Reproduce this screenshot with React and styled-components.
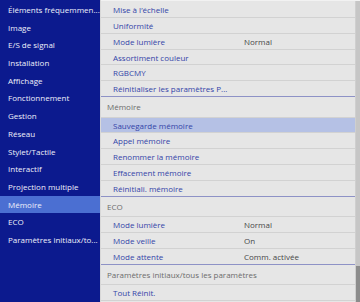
import React from 'react';
import styled, { createGlobalStyle } from 'styled-components';

const GlobalStyle = createGlobalStyle`
  html, body {
    margin: 0;
    padding: 0;
    width: 360px;
    height: 302px;
    overflow: hidden;
    background: #e6e6e6;
  }
  * {
    box-sizing: border-box;
  }
`;

const Screen = styled.div`
  display: flex;
  width: 360px;
  height: 302px;
  font-family: 'Open Sans', 'Noto Sans', sans-serif;
  font-size: 8px;
`;

const Sidebar = styled.div`
  width: 101px;
  background: #0c1a8e;
  padding-top: 1px;
  border-right: 1px solid #d8d8d8;
`;

const SideItem = styled.div`
  height: 17.7px;
  line-height: 17.7px;
  padding-left: 8px;
  color: #eef0fa;
  white-space: nowrap;
  background: ${({ selected }) => (selected ? '#4b6fd2' : 'transparent')};
`;

const Content = styled.div`
  flex: 1;
  display: flex;
  background: #e6e6e6;
  border-top: 1px solid #f2f2f2;
`;

const List = styled.div`
  flex: 1;
  padding-top: 1px;
  border-right: 1px solid #cfcfcf;
`;

const Header = styled.div`
  height: 20.5px;
  line-height: 20px;
  padding-left: 6px;
  color: #6c6c6c;
  border-bottom: 1px solid #d2d2d2;
  white-space: nowrap;
`;

const Row = styled.div`
  display: grid;
  grid-template-columns: 131px 1fr;
  height: 15.85px;
  line-height: 15px;
  padding-left: 12px;
  color: #3444a8;
  white-space: nowrap;
  background: ${({ active }) => (active ? '#b5c1e5' : 'transparent')};
  border-bottom: 1px solid ${({ last }) => (last ? '#8e92c6' : '#d2d2d2')};
`;

const Value = styled.span`
  color: #474747;
`;

const Scrollbar = styled.div`
  width: 4px;
  display: flex;
  flex-direction: column;
  justify-content: flex-end;
  background: #c6c6c6;
`;

const Thumb = styled.div`
  height: 36px;
  background: #8c8c8c;
`;

const menu = [
  'Éléments fréquemmen...',
  'Image',
  'E/S de signal',
  'Installation',
  'Affichage',
  'Fonctionnement',
  'Gestion',
  'Réseau',
  'Stylet/Tactile',
  'Interactif',
  'Projection multiple',
  'Mémoire',
  'ECO',
  'Paramètres initiaux/to...',
];

const groups = [
  {
    items: [
      ['Mise à l\u2019échelle'],
      ['Uniformité'],
      ['Mode lumière', 'Normal'],
      ['Assortiment couleur'],
      ['RGBCMY'],
      ['Réinitialiser les paramètres P...'],
    ],
  },
  {
    title: 'Mémoire',
    items: [
      ['Sauvegarde mémoire'],
      ['Appel mémoire'],
      ['Renommer la mémoire'],
      ['Effacement mémoire'],
      ['Réinitiali. mémoire'],
    ],
    active: 0,
  },
  {
    title: 'ECO',
    items: [
      ['Mode lumière', 'Normal'],
      ['Mode veille', 'On'],
      ['Mode attente', 'Comm. activée'],
    ],
  },
  {
    title: 'Paramètres initiaux/tous les paramètres',
    items: [['Tout Réinit.']],
  },
];

export default function App() {
  return (
    <>
      <GlobalStyle />
      <Screen>
        <Sidebar>
          {menu.map((label) => (
            <SideItem key={label} selected={label === 'Mémoire'}>
              {label}
            </SideItem>
          ))}
        </Sidebar>
        <Content>
          <List>
            {groups.map((g, gi) => (
              <React.Fragment key={gi}>
                {g.title && <Header>{g.title}</Header>}
                {g.items.map(([label, value], i) => (
                  <Row
                    key={label}
                    active={g.active === i}
                    last={i === g.items.length - 1 && gi < groups.length - 1}
                  >
                    <span>{label}</span>
                    {value && <Value>{value}</Value>}
                  </Row>
                ))}
              </React.Fragment>
            ))}
          </List>
          <Scrollbar>
            <Thumb />
          </Scrollbar>
        </Content>
      </Screen>
    </>
  );
}
